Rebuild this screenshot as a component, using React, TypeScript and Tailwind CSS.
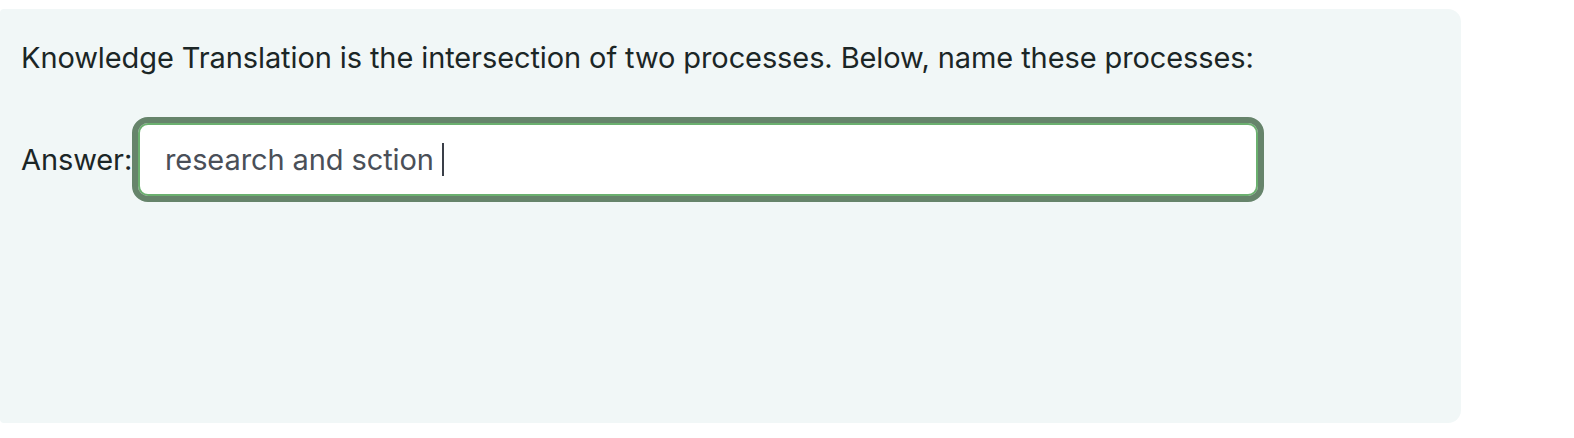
export default function App() {
  return (
    <div className="w-[1574px] h-[438px] bg-white pt-[9px]" style={{ fontFamily: 'Inter, "Noto Sans", sans-serif' }}>
      <div className="w-[1461px] h-[414px] bg-[#f1f7f7] rounded-r-[13px] rounded-l-[4px] pl-[21px] pt-[29px]">
        <p className="text-[29px] leading-[40px] text-[#1b2626] tracking-[-0.1px]">
          Knowledge Translation is the intersection of two processes. Below, name these processes:
        </p>
        <div className="flex items-center mt-[45px]">
          <span className="text-[29px] leading-[40px] text-[#1b2626] tracking-[-0.1px] w-[117px]">Answer:</span>
          <div className="w-[1120px] h-[73px] bg-white border-2 border-[#6bb06f] rounded-[10px] outline-[6px] outline-solid outline-[#66846b] flex items-center pl-[25px]">
            <span className="text-[29px] text-[#4a4f58] tracking-[-0.1px]">research and sction</span>
            <span className="ml-[8px] w-[2px] h-[33px] bg-[#3a3f48]"></span>
          </div>
        </div>
      </div>
    </div>
  );
}
